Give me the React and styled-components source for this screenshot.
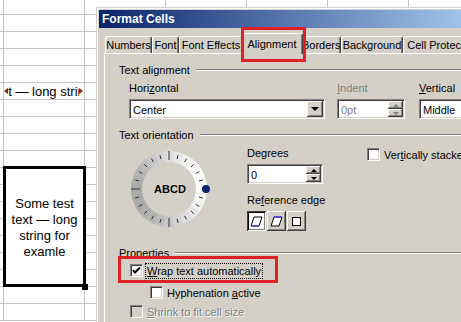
import React from 'react';
import styled, { createGlobalStyle } from 'styled-components';

const GlobalStyle = createGlobalStyle`
  html, body { margin: 0; padding: 0; background: #fff; overflow: hidden; }
  body { font-family: "Liberation Sans", Arial, sans-serif; }
`;

const FACE = '#d4d0c8';
const SHADOW = '#808080';
const DARK = '#404040';

const Screen = styled.div`
  position: relative;
  width: 461px;
  height: 322px;
  overflow: hidden;
  background: #fff;
`;

/* ---------- spreadsheet behind the dialog ---------- */

const Sheet = styled.div`
  display: grid;
  grid-template-columns: 4px repeat(6, 81px);
  grid-template-rows: 15px repeat(18, 17px);
`;

const Cell = styled.div`
  box-sizing: border-box;
  border-right: 1px solid #c6c6c6;
  border-bottom: 1px solid #c6c6c6;
`;

const OverflowCell = styled(Cell)`
  grid-row: 6;
  grid-column: 2;
  display: flex;
  align-items: center;
  padding: 0 1px 0 0;
  font: 13px "Liberation Sans", Arial, sans-serif;
  color: #000;
`;

const Arrow = styled.span`
  width: 0;
  height: 0;
  border-top: 3px solid transparent;
  border-bottom: 3px solid transparent;
  ${p => (p.$dir === 'left'
    ? 'border-right: 4px solid #7a2416;'
    : 'border-left: 4px solid #7a2416;')}
`;

const Clip = styled.div`
  flex: 1;
  display: flex;
  justify-content: center;
  overflow: hidden;
  white-space: nowrap;
  padding-right: 2px;
`;

const BoldCell = styled.div`
  position: relative;
  grid-row: 11 / span 7;
  grid-column: 2;
  margin: -2px -1px 0 -1px;
  border: 3px solid #000;
  background: #fff;
  display: flex;
  align-items: center;
  justify-content: center;
  text-align: center;
  font: 13px/16px "Liberation Sans", Arial, sans-serif;
  color: #000;
  padding: 2px 4px 0;
`;

const Handle = styled.span`
  position: absolute;
  right: -5px;
  bottom: -6px;
  width: 6px;
  height: 6px;
  background: #000;
`;

/* ---------- the dialog window ---------- */

const Dialog = styled.div`
  position: absolute;
  left: 96px;
  top: 7px;
  width: 380px;
  height: 330px;
  box-sizing: border-box;
  padding: 3px 0 0 3px;
  background: ${FACE};
  box-shadow: inset 1px 1px 0 ${FACE}, inset 2px 2px 0 #fff;
  font: 11px "Liberation Sans", Arial, sans-serif;
  color: #000;
`;

const TitleBar = styled.div`
  height: 18px;
  display: flex;
  align-items: center;
  padding-left: 3px;
  background: linear-gradient(to right, #0a246a, #a6caf0);
  color: #fff;
  font: bold 12px "Liberation Sans", Arial, sans-serif;
`;

const Body = styled.div`
  padding: 5px 0 0 5px;
`;

const TabStrip = styled.div`
  display: flex;
  align-items: flex-end;
  height: 20px;
  padding-left: 1px;
`;

const Tab = styled.div`
  position: relative;
  box-sizing: border-box;
  flex: none;
  width: ${p => p.$w}px;
  height: ${p => (p.$active ? 21 : 17)}px;
  margin: ${p => (p.$active ? '0 -2px -1px -2px' : '0')};
  padding-top: ${p => (p.$active ? 4 : 2)}px;
  z-index: ${p => (p.$active ? 2 : 1)};
  background: ${FACE};
  border-top: 1px solid #fff;
  border-left: 1px solid #fff;
  border-right: 1px solid ${DARK};
  border-radius: 3px 3px 0 0;
  box-shadow: inset -1px 0 0 ${SHADOW};
  text-align: center;
  white-space: nowrap;
  overflow: hidden;
`;

const Panel = styled.div`
  height: 300px;
  box-sizing: border-box;
  padding: 9px 0 0 14px;
  border-top: 1px solid #fff;
  border-left: 1px solid #fff;
`;

const GroupHeader = styled.div`
  display: flex;
  align-items: center;
  height: 13px;
  gap: 6px;
  margin-top: ${p => p.$top || 0}px;
  white-space: nowrap;

  &::after {
    content: '';
    flex: 1;
    border-top: 1px solid ${SHADOW};
    border-bottom: 1px solid #fff;
  }
`;

const AlignRow = styled.div`
  display: flex;
  margin-top: 6px;
  padding-left: 10px;
`;

const FieldGroup = styled.div`
  display: flex;
  flex-direction: column;
  gap: 4px;
  width: ${p => p.$w}px;
  margin-left: ${p => p.$ml || 0}px;
  flex: none;
`;

const Label = styled.div`
  height: 13px;
  line-height: 13px;
  margin-top: ${p => p.$top || 0}px;
  white-space: nowrap;
  color: ${p => (p.$disabled ? SHADOW : '#000')};
`;

const Field = styled.div`
  box-sizing: border-box;
  height: 20px;
  margin-top: ${p => p.$top || 0}px;
  display: flex;
  align-items: center;
  padding-left: 3px;
  border: 1px solid;
  border-color: ${SHADOW} #fff #fff ${SHADOW};
  box-shadow: inset 1px 1px 0 ${DARK}, inset -1px -1px 0 ${FACE};
  background: #fff;
  color: ${p => (p.$disabled ? SHADOW : '#000')};
  white-space: nowrap;
  overflow: hidden;
`;

const FieldText = styled.span`
  flex: 1;
  padding-top: 1px;
`;

const RaisedButton = styled.div`
  box-sizing: border-box;
  flex: none;
  width: 16px;
  height: 16px;
  margin-right: 1px;
  display: flex;
  align-items: center;
  justify-content: center;
  background: ${FACE};
  box-shadow: inset -1px -1px 0 ${DARK}, inset 1px 1px 0 #fff, inset -2px -2px 0 ${SHADOW};
`;

const DownTriangle = styled.span`
  width: 0;
  height: 0;
  border-left: ${p => p.$s}px solid transparent;
  border-right: ${p => p.$s}px solid transparent;
  border-top: ${p => p.$s}px solid ${p => p.$c || '#000'};
`;

const UpTriangle = styled.span`
  width: 0;
  height: 0;
  border-left: ${p => p.$s}px solid transparent;
  border-right: ${p => p.$s}px solid transparent;
  border-bottom: ${p => p.$s}px solid ${p => p.$c || '#000'};
`;

const Spin = styled.div`
  display: flex;
  flex-direction: column;
  flex: none;
  margin-right: 1px;
`;

const SpinHalf = styled(RaisedButton)`
  width: 15px;
  height: 8px;
  margin: 0;
`;

const OrientRow = styled.div`
  display: flex;
  align-items: flex-start;
  margin-top: 6px;
`;

const DialBox = styled.svg`
  flex: none;
  margin-left: 8px;
  display: block;
`;

const SideColumn = styled.div`
  display: flex;
  flex-direction: column;
  margin-left: 36px;
  width: 76px;
  flex: none;
`;

const EdgeButtons = styled.div`
  display: flex;
  gap: 1px;
  margin-top: 4px;
`;

const EdgeButton = styled.div`
  box-sizing: border-box;
  width: 19px;
  height: 20px;
  display: flex;
  align-items: center;
  justify-content: center;
  background: ${p => (p.$pressed ? '#fff' : FACE)};
  box-shadow: ${p => (p.$pressed
    ? `inset 1px 1px 0 ${DARK}, inset -1px -1px 0 #fff, inset 2px 2px 0 #000, inset -2px -2px 0 ${SHADOW}`
    : `inset -1px -1px 0 ${DARK}, inset 1px 1px 0 #fff, inset -2px -2px 0 ${SHADOW}`)};
`;

const CheckRow = styled.div`
  display: flex;
  align-items: center;
  height: 13px;
  margin-top: ${p => p.$top || 0}px;
  margin-left: ${p => p.$left || 0}px;
  color: ${p => (p.$disabled ? SHADOW : '#000')};
  white-space: nowrap;
`;

const Box = styled.span`
  box-sizing: border-box;
  flex: none;
  width: 13px;
  height: 13px;
  display: flex;
  align-items: center;
  justify-content: center;
  border: 1px solid;
  border-color: ${SHADOW} #fff #fff ${SHADOW};
  box-shadow: inset 1px 1px 0 ${DARK}, inset -1px -1px 0 ${FACE};
  background: ${p => (p.$disabled ? FACE : '#fff')};
`;

const CheckLabel = styled.span`
  margin-left: ${p => (p.$focus ? 3 : 4)}px;
  padding: 1px ${p => (p.$focus ? 1 : 0)}px;
  outline: ${p => (p.$focus ? '1px dotted #000' : 'none')};
  text-shadow: ${p => (p.$disabled ? '1px 1px 0 #fff' : 'none')};
`;

const Callout = styled.div`
  position: absolute;
  left: ${p => p.$x}px;
  top: ${p => p.$y}px;
  width: ${p => p.$w}px;
  height: ${p => p.$h}px;
  box-sizing: border-box;
  border: 3px solid #de2226;
  z-index: 5;
`;

/* ---------- drawings ---------- */

const Dial = () => {
  const cx = 42;
  const cy = 42;
  const ro = 38;
  const ri = 27;
  const pt = (r, deg) => {
    const a = (deg * Math.PI) / 180;
    return [cx + r * Math.cos(a), cy - r * Math.sin(a)];
  };
  const segs = [];
  for (let i = 0; i < 24; i++) {
    const a0 = i * 15 - 7.5;
    const a1 = a0 + 15;
    const mid = (a0 + a1) / 2;
    const t = (1 + Math.cos(((mid - 15) * Math.PI) / 180)) / 2;
    const g = Math.round(168 + t * 84);
    const [x0, y0] = pt(ro, a0);
    const [x1, y1] = pt(ro, a1);
    const [x2, y2] = pt(ri, a1);
    const [x3, y3] = pt(ri, a0);
    segs.push(
      <path
        key={'s' + i}
        d={`M${x0} ${y0} A${ro} ${ro} 0 0 0 ${x1} ${y1} L${x2} ${y2} A${ri} ${ri} 0 0 1 ${x3} ${y3} Z`}
        fill={`rgb(${g},${g},${g})`}
      />
    );
  }
  const ticks = [];
  for (let i = 1; i < 24; i++) {
    const long = i % 6 === 0;
    const [x0, y0] = pt(long ? 29 : 31, i * 15);
    const [x1, y1] = pt(long ? 38 : 35, i * 15);
    ticks.push(<line key={'t' + i} x1={x0} y1={y0} x2={x1} y2={y1} stroke="#303030" strokeWidth="1" />);
  }
  const [dx, dy] = pt(37, 0);
  return (
    <DialBox width="84" height="84" viewBox="0 0 84 84">
      {segs}
      {ticks}
      <circle cx={dx} cy={dy} r="4" fill="#0a246a" />
      <text x="43" y="46" textAnchor="middle" fontFamily="Liberation Sans, Arial, sans-serif" fontWeight="bold" fontSize="11" fill="#000">
        ABCD
      </text>
    </DialBox>
  );
};

const EdgeIcon = ({ kind }) => (
  <svg width="13" height="13" viewBox="0 0 13 13">
    {kind === 'bottom' && (
      <>
        <path d="M4 2 L12 2 L9 11 L1 11 Z" fill="#fff" stroke="#000" strokeWidth="1" />
        <line x1="1" y1="11" x2="9" y2="11" stroke="#5b4fc9" strokeWidth="2" />
      </>
    )}
    {kind === 'top' && (
      <>
        <path d="M4 2 L12 2 L9 11 L1 11 Z" fill="#fff" stroke="#000" strokeWidth="1" />
        <line x1="4" y1="2" x2="12" y2="2" stroke="#5b4fc9" strokeWidth="2" />
      </>
    )}
    {kind === 'box' && <rect x="2.5" y="2.5" width="8" height="8" fill="#fff" stroke="#000" strokeWidth="1" />}
  </svg>
);

const Tick = () => (
  <svg width="9" height="9" viewBox="0 0 9 9">
    <polyline points="1,4 3,6.5 8,1.5" fill="none" stroke="#000" strokeWidth="2" />
  </svg>
);

const tabs = [
  { label: 'Numbers', w: 47 },
  { label: 'Font', w: 27 },
  { label: 'Font Effects', w: 64 },
  { label: 'Alignment', w: 62, active: true },
  { label: 'Borders', w: 40 },
  { label: 'Background', w: 62 },
  { label: 'Cell Protection', w: 80 },
];

const App = () => {
  const plainCells = Array.from({ length: 7 * 19 - 8 }, (_, i) => <Cell key={i} />);

  return (
    <Screen>
      <GlobalStyle />
      <Sheet>
        <OverflowCell>
          <Arrow $dir="left" />
          <Clip>Some test text — long string for examle</Clip>
          <Arrow $dir="right" />
        </OverflowCell>
        <BoldCell>
          Some test text — long string for examle
          <Handle />
        </BoldCell>
        {plainCells}
      </Sheet>

      <Dialog>
        <TitleBar>Format Cells</TitleBar>
        <Body>
          <TabStrip>
            {tabs.map(t => (
              <Tab key={t.label} $w={t.w} $active={t.active}>
                {t.label}
              </Tab>
            ))}
          </TabStrip>
          <Panel>
            <GroupHeader>Text alignment</GroupHeader>
            <AlignRow>
              <FieldGroup $w={196}>
                <Label>Hori<u>z</u>ontal</Label>
                <Field>
                  <FieldText>Center</FieldText>
                  <RaisedButton>
                    <DownTriangle $s={4} />
                  </RaisedButton>
                </Field>
              </FieldGroup>
              <FieldGroup $w={68} $ml={12}>
                <Label $disabled><u>I</u>ndent</Label>
                <Field $disabled>
                  <FieldText>0pt</FieldText>
                  <Spin>
                    <SpinHalf><UpTriangle $s={3} $c={SHADOW} /></SpinHalf>
                    <SpinHalf><DownTriangle $s={3} $c={SHADOW} /></SpinHalf>
                  </Spin>
                </Field>
              </FieldGroup>
              <FieldGroup $w={80} $ml={14}>
                <Label><u>V</u>ertical</Label>
                <Field>
                  <FieldText>Middle</FieldText>
                </Field>
              </FieldGroup>
            </AlignRow>

            <GroupHeader $top={9}>Text orientation</GroupHeader>
            <OrientRow>
              <Dial />
              <SideColumn>
                <Label>Degrees</Label>
                <Field $top={4}>
                  <FieldText>0</FieldText>
                  <Spin>
                    <SpinHalf><UpTriangle $s={3} /></SpinHalf>
                    <SpinHalf><DownTriangle $s={3} /></SpinHalf>
                  </Spin>
                </Field>
                <Label $top={10}>Re<u>f</u>erence edge</Label>
                <EdgeButtons>
                  <EdgeButton $pressed><EdgeIcon kind="bottom" /></EdgeButton>
                  <EdgeButton><EdgeIcon kind="top" /></EdgeButton>
                  <EdgeButton><EdgeIcon kind="box" /></EdgeButton>
                </EdgeButtons>
              </SideColumn>
              <CheckRow $left={44} $top={1}>
                <Box />
                <CheckLabel>Ver<u>t</u>ically stacked</CheckLabel>
              </CheckRow>
            </OrientRow>

            <GroupHeader $top={15}>Properties</GroupHeader>
            <CheckRow $top={5} $left={11}>
              <Box><Tick /></Box>
              <CheckLabel $focus><u>W</u>rap text automatically</CheckLabel>
            </CheckRow>
            <CheckRow $top={9} $left={31}>
              <Box />
              <CheckLabel>Hyphenation <u>a</u>ctive</CheckLabel>
            </CheckRow>
            <CheckRow $top={6} $left={11} $disabled>
              <Box $disabled />
              <CheckLabel $disabled><u>S</u>hrink to fit cell size</CheckLabel>
            </CheckRow>
          </Panel>
        </Body>
      </Dialog>

      <Callout $x={241} $y={27} $w={65} $h={35} />
      <Callout $x={118} $y={256} $w={160} $h={27} />
    </Screen>
  );
};

export default App;
